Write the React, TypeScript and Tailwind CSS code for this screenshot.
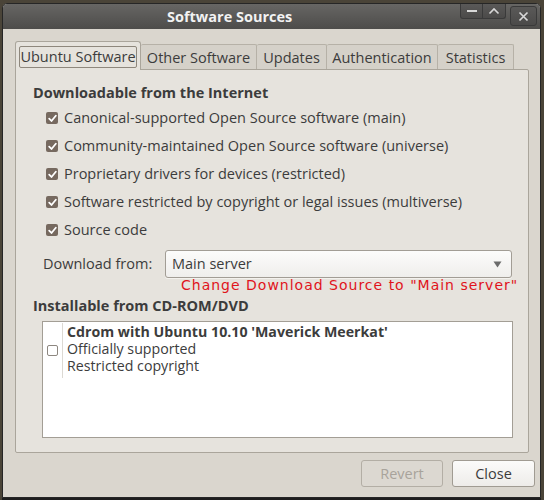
import React from "react";

const ui = { fontFamily: '"Open Sans", "Noto Sans", sans-serif' };
const note = { fontFamily: '"DejaVu Sans", sans-serif' };

function Check({ on }: { on?: boolean }) {
  if (!on) {
    return (
      <span className="inline-block w-[11px] h-[11px] rounded-[2px] border border-[#8d8780] bg-white shrink-0" />
    );
  }
  return (
    <span className="flex items-center justify-center w-[12px] h-[12px] rounded-[2px] bg-[#76695f] shrink-0">
      <svg width="9" height="9" viewBox="0 0 9 9">
        <path d="M1.2 4.6 L3.5 7 L7.8 1.8" fill="none" stroke="#fff" strokeWidth="1.8" strokeLinecap="round" strokeLinejoin="round" />
      </svg>
    </span>
  );
}

const sources = [
  "Canonical-supported Open Source software (main)",
  "Community-maintained Open Source software (universe)",
  "Proprietary drivers for devices (restricted)",
  "Software restricted by copyright or legal issues (multiverse)",
  "Source code",
];

const tabs = [
  { label: "Other Software", w: "w-[116px]" },
  { label: "Updates", w: "w-[70px]" },
  { label: "Authentication", w: "w-[111px]" },
  { label: "Statistics", w: "w-[76px]" },
];

export default function App() {
  return (
    <div className="w-[544px] h-[500px] bg-[#4a4438] overflow-hidden text-[#3c3c3c] text-[14.5px]" style={ui}>
      <div className="ml-[2px] mt-[3px] w-[539px] h-[495px] flex flex-col rounded-t-[5px] border border-[#262626] bg-[#dad6ce] shadow-[0_2px_0_#1e1e1e] overflow-hidden">
        {/* title bar */}
        <div className="relative h-[25px] shrink-0 bg-gradient-to-b from-[#676664] to-[#4d4c4a] flex items-center">
          <span className="ml-[164px] text-[14.5px] font-bold text-[#f2f2f2]">Software Sources</span>
          <div className="absolute right-[3px] top-0 flex items-start gap-[4px]">
            <div className="flex h-[15px] rounded-b-[3px] border border-t-0 border-[#3a3a3a] bg-gradient-to-b from-[#5a5958] to-[#4b4a49]">
              <div className="w-[22px] flex items-center justify-center border-r border-[#3a3a3a]">
                <span className="block w-[10px] h-[2px] bg-[#d8d8d8]" />
              </div>
              <div className="w-[22px] flex items-center justify-center">
                <svg width="12" height="8" viewBox="0 0 12 8">
                  <path d="M1.5 6.5 L6 2 L10.5 6.5" fill="none" stroke="#d8d8d8" strokeWidth="1.6" />
                </svg>
              </div>
            </div>
            <div className="mt-[2px] w-[27px] h-[20px] rounded-[3px] border border-[#3a3a3a] bg-gradient-to-b from-[#5a5958] to-[#4b4a49] flex items-center justify-center">
              <svg width="11" height="11" viewBox="0 0 11 11">
                <path d="M1.5 1.5 L9.5 9.5 M9.5 1.5 L1.5 9.5" stroke="#d8d8d8" strokeWidth="1.7" />
              </svg>
            </div>
          </div>
        </div>

        {/* body */}
        <div className="flex-1 flex flex-col pl-[12px] pt-[11px]">
          {/* tabs */}
          <div className="flex items-end h-[29px] relative z-10">
            <div className="w-[126px] h-[29px] -mb-px bg-[#e6e3dd] border border-b-0 border-[#aaa59b] rounded-t-[3px] pt-[4px] px-[3px]">
              <div className="h-[22px] rounded-[2px] border border-[#8e877c] flex items-center justify-center">
                Ubuntu Software
              </div>
            </div>
            {tabs.map((t) => (
              <div
                key={t.label}
                className={`${t.w} h-[25px] border border-l-0 border-b-0 border-[#b6b1a7] bg-[#d5d1c9] rounded-t-[2px] flex items-center justify-center pt-[1px]`}
              >
                {t.label}
              </div>
            ))}
          </div>

          {/* notebook page */}
          <div className="w-[514px] h-[384px] border border-[#aaa59b] rounded-b-[2px] rounded-tr-[2px] bg-[#e6e3dd] flex flex-col pt-[13px] pl-[17px]">
            <div className="h-[20px] flex items-center font-bold">
              Downloadable from the Internet
            </div>
            <div className="mt-[1px] flex flex-col pl-[13px]">
              {sources.map((s) => (
                <div key={s} className="h-[28px] flex items-center gap-[6px]">
                  <Check on />
                  <span>{s}</span>
                </div>
              ))}
            </div>

            <div className="mt-[6px] flex items-center h-[28px]">
              <span className="w-[132px] pl-[10px]">Download from:</span>
              <div className="w-[347px] h-[28px] rounded-[3px] border border-[#a29d95] bg-gradient-to-b from-[#fcfcfb] to-[#efeeec] flex items-center justify-between pl-[6px] pr-[9px] shadow-[0_1px_0_#f4f2ee]">
                <span>Main server</span>
                <svg width="9" height="7" viewBox="0 0 9 7">
                  <path d="M0.5 0.5 L8.5 0.5 L4.5 6.5 Z" fill="#6b6b6b" />
                </svg>
              </div>
            </div>

            <div className="h-[14px] flex items-center pl-[148px] text-[14px] tracking-[1px] text-[#e0131b] leading-none" style={note}>
              Change Download Source to "Main server"
            </div>

            <div className="mt-[4px] h-[20px] flex items-center font-bold">
              Installable from CD-ROM/DVD
            </div>

            <div className="mt-[5px] ml-[9px] w-[471px] h-[117px] border border-[#a39e95] bg-white flex items-start">
              <div className="w-[20px] h-[55px] mt-[1px] flex items-center justify-center border-r border-[#dcd9d3]">
                <Check />
              </div>
              <div className="pl-[4px] pt-[1px] flex flex-col text-[14.2px] leading-[17px]">
                <div className="h-[17px] font-bold">Cdrom with Ubuntu 10.10 'Maverick Meerkat'</div>
                <div className="h-[17px]">Officially supported</div>
                <div className="h-[17px]">Restricted copyright</div>
              </div>
            </div>
          </div>

          {/* buttons */}
          <div className="mt-[7px] flex justify-end gap-[9px] pr-[5px]">
            <button className="w-[82px] h-[27px] rounded-[3px] border border-[#b3aea5] bg-[#dcd8d1] text-[#a8a39b]">
              Revert
            </button>
            <button className="w-[83px] h-[27px] rounded-[3px] border border-[#a09b92] bg-gradient-to-b from-[#fbfbfa] to-[#eeece9]">
              Close
            </button>
          </div>
        </div>
      </div>
    </div>
  );
}
